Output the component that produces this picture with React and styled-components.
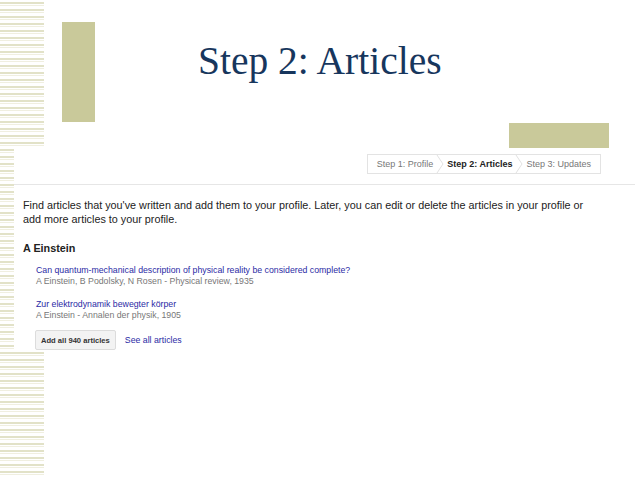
import React from "react";
import styled, { createGlobalStyle } from "styled-components";

const Global = createGlobalStyle`
  html, body { margin: 0; padding: 0; background: #fff; }
  * { box-sizing: border-box; }
`;

const Slide = styled.div`
  width: 638px;
  height: 478px;
  overflow: hidden;
  display: flex;
  flex-direction: column;
  background-color: #fff;
  background-image: repeating-linear-gradient(
    to bottom,
    #fff 0 2px,
    #e2e2c8 2px 4px,
    #fff 4px 5px,
    #f0efe0 5px 6px,
    #fff 6px 7px
  );
  background-size: 44px 100%;
  background-repeat: no-repeat;
`;

const Header = styled.div`
  height: 148px;
  display: flex;
  align-items: flex-start;
  padding-left: 62px;
`;

const Block = styled.div`
  background: #c9c99a;
  width: ${(p) => p.$w}px;
  height: ${(p) => p.$h}px;
`;

const TallBlock = styled(Block)`
  margin-top: 22px;
`;

const SmallBlock = styled(Block)`
  align-self: flex-end;
  margin-left: auto;
  margin-right: 29px;
`;

const Title = styled.h1`
  margin: 39px 0 0 103px;
  font-family: "Liberation Serif", "Times New Roman", serif;
  font-weight: normal;
  font-size: 39.5px;
  line-height: 44px;
  color: #17365d;
  white-space: nowrap;
`;

const Page = styled.div`
  margin-left: 14px;
  height: 204px;
  background: #fff;
  font-family: "Liberation Sans", Arial, sans-serif;
  display: flex;
  flex-direction: column;
`;

const CrumbRow = styled.div`
  display: flex;
  justify-content: flex-end;
  padding: 6px 37px 0 0;
`;

const Crumbs = styled.div`
  display: flex;
  align-items: stretch;
  height: 20px;
  border: 1px solid #e3e3e3;
  padding: 0 9px 0 9px;
`;

const Crumb = styled.span`
  display: flex;
  align-items: center;
  font-size: 9px;
  color: ${(p) => (p.$active ? "#222" : "#777")};
  font-weight: ${(p) => (p.$active ? "bold" : "normal")};
  white-space: nowrap;
`;

const Sep = styled.svg`
  width: 14px;
  height: 18px;
  flex: none;
`;

const Rule = styled.div`
  margin: 10px 3px 0 0;
  border-top: 1px solid #e6e6e6;
`;

const Content = styled.div`
  padding: 13px 0 0 9px;
`;

const Intro = styled.p`
  margin: 0;
  font-size: 10.8px;
  line-height: 14px;
  color: #222;
  width: 570px;
`;

const Author = styled.h2`
  margin: 15px 0 0;
  font-size: 10.8px;
  line-height: 14px;
  font-weight: bold;
  color: #222;
`;

const List = styled.div`
  padding-left: 13px;
  margin-top: 10px;
  display: flex;
  flex-direction: column;
  gap: 12px;
`;

const Article = styled.div`
  display: flex;
  flex-direction: column;
`;

const ArticleTitle = styled.a`
  font-size: 8.75px;
  line-height: 11px;
  color: #2b2ba5;
  text-decoration: none;
`;

const Meta = styled.span`
  font-size: 8.75px;
  line-height: 11px;
  color: #777;
`;

const Actions = styled.div`
  display: flex;
  align-items: center;
  gap: 9px;
  margin-top: -3px;
  margin-left: -1px;
`;

const Button = styled.button`
  height: 20px;
  padding: 0 5px;
  font-family: "Liberation Sans", Arial, sans-serif;
  font-size: 7.6px;
  font-weight: bold;
  color: #333;
  background: #f3f3f3;
  border: 1px solid #dcdcdc;
  border-radius: 2px;
`;

const Link = styled.a`
  font-size: 8.75px;
  color: #2b2ba5;
  text-decoration: none;
`;

function Chevron() {
  return (
    <Sep viewBox="0 0 14 18">
      <path d="M4 0 L10 9 L4 18" fill="none" stroke="#e2e2e2" strokeWidth="1" />
    </Sep>
  );
}

export default function App() {
  return (
    <>
      <Global />
      <Slide>
        <Header>
          <TallBlock $w={33} $h={100} />
          <Title>Step 2: Articles</Title>
          <SmallBlock $w={100} $h={25} />
        </Header>
        <Page>
          <CrumbRow>
            <Crumbs>
              <Crumb>Step 1: Profile</Crumb>
              <Chevron />
              <Crumb $active>Step 2: Articles</Crumb>
              <Chevron />
              <Crumb>Step 3: Updates</Crumb>
            </Crumbs>
          </CrumbRow>
          <Rule />
          <Content>
            <Intro>
              Find articles that you've written and add them to your profile. Later, you can edit or
              delete the articles in your profile or add more articles to your profile.
            </Intro>
            <Author>A Einstein</Author>
            <List>
              <Article>
                <ArticleTitle href="#">
                  Can quantum-mechanical description of physical reality be considered complete?
                </ArticleTitle>
                <Meta>A Einstein, B Podolsky, N Rosen - Physical review, 1935</Meta>
              </Article>
              <Article>
                <ArticleTitle href="#">Zur elektrodynamik bewegter körper</ArticleTitle>
                <Meta>A Einstein - Annalen der physik, 1905</Meta>
              </Article>
              <Actions>
                <Button>Add all 940 articles</Button>
                <Link href="#">See all articles</Link>
              </Actions>
            </List>
          </Content>
        </Page>
      </Slide>
    </>
  );
}
